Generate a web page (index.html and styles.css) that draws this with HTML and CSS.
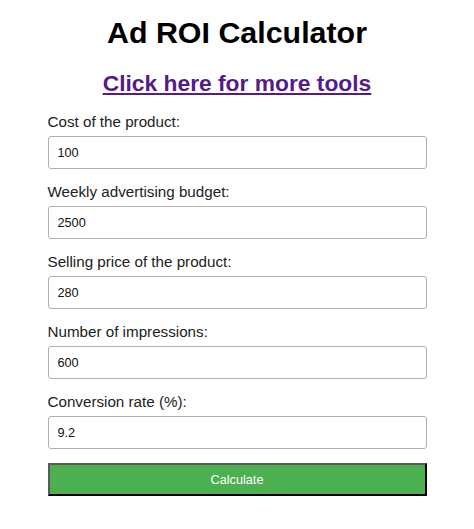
FILE: index.html
```html
<!DOCTYPE html>
<html lang="en">
<head>
<meta charset="utf-8">
<title>Ad ROI Calculator</title>
<link rel="stylesheet" href="styles.css">
</head>
<body>
<div class="container">
  <h1 class="title">Ad ROI Calculator</h1>
  <h2 class="more"><a href="#" class="more-link">Click here for more tools</a></h2>
  <form class="form">
    <label class="label" for="cost">Cost of the product:</label>
    <input class="field" id="cost" type="text" value="100">
    <label class="label" for="budget">Weekly advertising budget:</label>
    <input class="field" id="budget" type="text" value="2500">
    <label class="label" for="price">Selling price of the product:</label>
    <input class="field" id="price" type="text" value="280">
    <label class="label" for="impr">Number of impressions:</label>
    <input class="field" id="impr" type="text" value="600">
    <label class="label" for="conv">Conversion rate (%):</label>
    <input class="field" id="conv" type="text" value="9.2">
    <button class="calc" type="button">Calculate</button>
  </form>
</div>
</body>
</html>
```
FILE: styles.css
```css
html, body {
  margin: 0;
  padding: 0;
  background: #ffffff;
}
body {
  font-family: "Liberation Sans", Arial, sans-serif;
  color: #222;
}
.container {
  max-width: 379px;
  margin: 0 auto;
  padding: 14px 0 20px;
}
.title {
  font-size: 30.4px;
  font-weight: bold;
  color: #000;
  text-align: center;
  margin: 0;
  line-height: 36px;
}
.more {
  font-size: 22.8px;
  text-align: center;
  margin: 19px 0 16px;
  line-height: 28px;
}
.more-link {
  color: #551a8b;
  text-decoration: underline;
}
.form {
  display: flex;
  flex-direction: column;
}
.label {
  font-size: 15.2px;
  line-height: 18px;
  color: #222;
  margin-bottom: 5px;
}
.field {
  box-sizing: border-box;
  width: 100%;
  height: 33px;
  padding: 0 9px;
  border: 1px solid #b0b0b0;
  border-radius: 3px;
  font-family: "Liberation Sans", Arial, sans-serif;
  font-size: 12.7px;
  color: #111;
  background: #fff;
  margin: 0 0 14px;
}
.calc {
  box-sizing: border-box;
  width: 100%;
  height: 33px;
  background: #4caf50;
  color: #fff;
  border: 2px outset #767676;
  border-top-color: #5a5a5a;
  border-left-color: #5a5a5a;
  border-right-color: #1e1e1e;
  border-bottom-color: #1e1e1e;
  font-family: "Liberation Sans", Arial, sans-serif;
  font-size: 12.7px;
  padding: 0;
}
```
